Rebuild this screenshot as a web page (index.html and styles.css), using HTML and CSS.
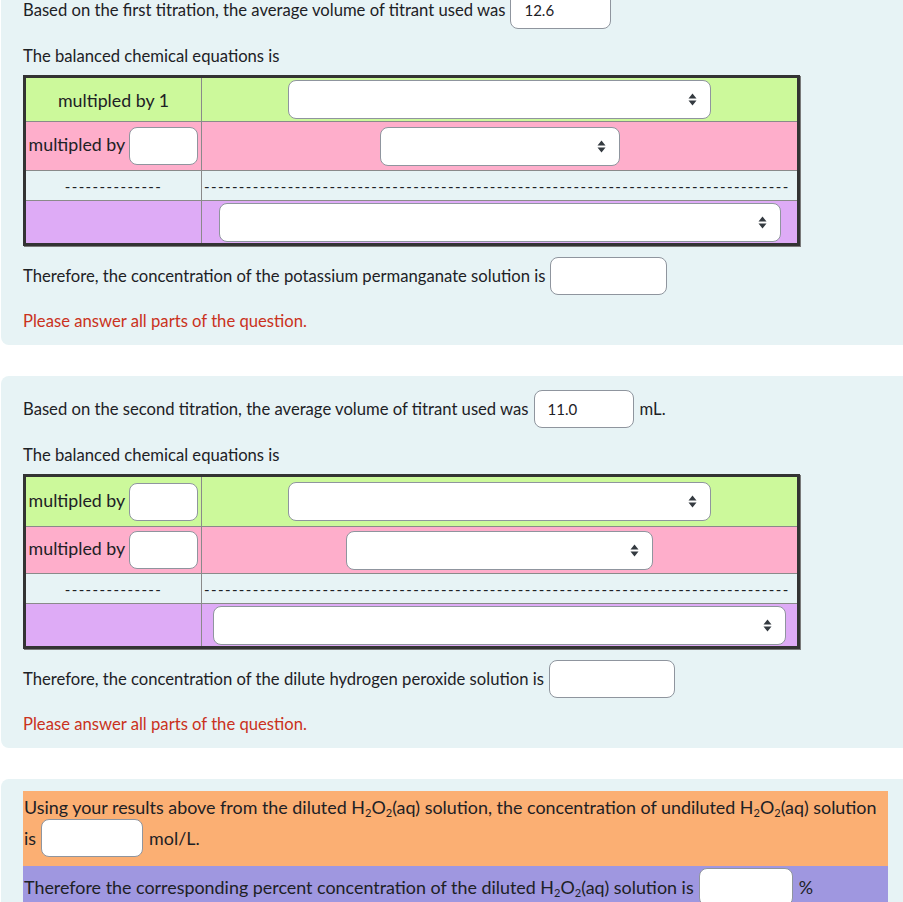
FILE: index.html
```html
<!DOCTYPE html>
<html lang="en">
<head>
<meta charset="utf-8">
<title>Titration</title>
<link rel="stylesheet" href="styles.css">
</head>
<body>
<div class="page">

  <section class="card card-first">
    <div class="line"><span>Based on the first titration, the average volume of titrant used was</span><input class="inp w-vol1" value="12.6"></div>
    <p class="txt">The balanced chemical equations is</p>
    <table class="eq">
      <colgroup><col class="c1"><col class="c2"></colgroup>
      <tr class="green r1a">
        <td>multipled by 1</td>
        <td><span class="sel w423"><select></select><svg class="arr" viewBox="0 0 9 13"><path d="M0.5 5.5 L4.5 0.5 L8.5 5.5 Z M0.5 7.5 L4.5 12.5 L8.5 7.5 Z"/></svg></span></td>
      </tr>
      <tr class="pink r2a">
        <td>multipled by <input class="inp mult"></td>
        <td><span class="sel w240"><select></select><svg class="arr" viewBox="0 0 9 13"><path d="M0.5 5.5 L4.5 0.5 L8.5 5.5 Z M0.5 7.5 L4.5 12.5 L8.5 7.5 Z"/></svg></span></td>
      </tr>
      <tr class="plain r3">
        <td class="dash">--------------</td>
        <td class="dash long">------------------------------------------------------------------------------------</td>
      </tr>
      <tr class="purple r4">
        <td></td>
        <td><span class="sel w562"><select></select><svg class="arr" viewBox="0 0 9 13"><path d="M0.5 5.5 L4.5 0.5 L8.5 5.5 Z M0.5 7.5 L4.5 12.5 L8.5 7.5 Z"/></svg></span></td>
      </tr>
    </table>
    <div class="line mt-gap"><span>Therefore, the concentration of the potassium permanganate solution is</span><input class="inp w117"></div>
    <p class="txt err">Please answer all parts of the question.</p>
  </section>

  <section class="card">
    <div class="line"><span>Based on the second titration, the average volume of titrant used was</span><input class="inp w-vol2" value="11.0"><span class="unit">mL.</span></div>
    <p class="txt">The balanced chemical equations is</p>
    <table class="eq">
      <colgroup><col class="c1"><col class="c2"></colgroup>
      <tr class="green r1b">
        <td>multipled by <input class="inp mult"></td>
        <td><span class="sel w423"><select></select><svg class="arr" viewBox="0 0 9 13"><path d="M0.5 5.5 L4.5 0.5 L8.5 5.5 Z M0.5 7.5 L4.5 12.5 L8.5 7.5 Z"/></svg></span></td>
      </tr>
      <tr class="pink r2b">
        <td>multipled by <input class="inp mult"></td>
        <td><span class="sel w307"><select></select><svg class="arr" viewBox="0 0 9 13"><path d="M0.5 5.5 L4.5 0.5 L8.5 5.5 Z M0.5 7.5 L4.5 12.5 L8.5 7.5 Z"/></svg></span></td>
      </tr>
      <tr class="plain r3">
        <td class="dash">--------------</td>
        <td class="dash long">------------------------------------------------------------------------------------</td>
      </tr>
      <tr class="purple r4">
        <td></td>
        <td><span class="sel w573"><select></select><svg class="arr" viewBox="0 0 9 13"><path d="M0.5 5.5 L4.5 0.5 L8.5 5.5 Z M0.5 7.5 L4.5 12.5 L8.5 7.5 Z"/></svg></span></td>
      </tr>
    </table>
    <div class="line mt-gap"><span>Therefore, the concentration of the dilute hydrogen peroxide solution is</span><input class="inp w126"></div>
    <p class="txt err">Please answer all parts of the question.</p>
  </section>

  <section class="card card-last">
    <div class="block orange">
      <div class="bline">Using your results above from the diluted H<sub>2</sub>O<sub>2</sub>(aq) solution, the concentration of undiluted H<sub>2</sub>O<sub>2</sub>(aq) solution</div>
      <div class="line"><span>is</span><input class="inp w102"><span class="unit">mol/L.</span></div>
    </div>
    <div class="block violet">
      <div class="line"><span>Therefore the corresponding percent concentration of the diluted H<sub>2</sub>O<sub>2</sub>(aq) solution is</span><input class="inp w94"><span class="unit">%</span></div>
    </div>
  </section>

</div>
</body>
</html>
```

FILE: styles.css
```css
html, body {
  margin: 0;
  padding: 0;
  overflow: hidden;
  background: #ffffff;
}

body {
  font-family: Lato, "Segoe UI", "Noto Sans", sans-serif;
  font-size: 16.65px;
  color: #1d2125;
}

.page {
  padding-left: 1px;
  width: 1100px;
}

.card {
  background: #e7f3f5;
  border-radius: 8px;
  width: 1000px;
  padding: 14px 22px 13px 22px;
  margin-bottom: 31px;
}

.card-first {
  margin-top: -23px;
}

.card-last {
  padding-top: 12px;
}

.line {
  display: flex;
  align-items: center;
  gap: 5px;
  height: 38px;
  white-space: nowrap;
}

.line .unit {
  margin-left: 1px;
}

.txt {
  margin: 16px 0 0 0;
  line-height: 22px;
}

.err {
  color: #ca3120;
  margin-top: 15px;
}

.mt-gap {
  margin-top: 11px;
}

.inp {
  box-sizing: border-box;
  height: 38px;
  border: 1px solid #8f959e;
  border-radius: 8px;
  background: #ffffff;
  font-family: Lato, "Segoe UI", sans-serif;
  font-size: 15px;
  color: #1d2125;
  padding: 0 13px;
  margin: 0;
  outline: none;
}

.w-vol1 { width: 101px; }
.w-vol2 { width: 100px; }
.w117 { width: 117px; }
.w126 { width: 126px; }
.w102 { width: 102px; }
.w94 { width: 94px; }
.mult { width: 69px; vertical-align: middle; }

/* equation table */
.eq {
  border-collapse: collapse;
  table-layout: fixed;
  width: 777px;
  margin-top: 8px;
  border: 3px solid #333333;
  box-shadow: 1px 1px 0 #7a7a7a;
}

.eq .c1 { width: 177px; }

.eq td {
  border: 1px solid #8a8a8a;
  padding: 0;
  text-align: center;
  vertical-align: middle;
  white-space: nowrap;
  font-size: 17.8px;
}

.green td { background: #ccf99b; }
.pink td { background: #feaecb; }
.purple td { background: #deabf6; }
.plain td { background: #e7f3f5; }

.r1a td { height: 43px; }
.r2a td { height: 48px; }
.r1b td { height: 49px; }
.r2b td { height: 46px; }
.r3 td { height: 29px; }
.r4 td { height: 42px; }

.eq td.dash {
  letter-spacing: 1.4px;
  font-size: 15px;
}

.eq td.long {
  text-align: left;
  padding-left: 2px;
}

/* select */
.sel {
  position: relative;
  display: inline-block;
  vertical-align: middle;
  height: 39px;
}

.sel select {
  box-sizing: border-box;
  width: 100%;
  height: 39px;
  border: 1px solid #8f959e;
  border-radius: 8px;
  background: #ffffff;
  appearance: none;
  -webkit-appearance: none;
  margin: 0;
  display: block;
}

.sel .arr {
  position: absolute;
  right: 14px;
  top: 13px;
  width: 9px;
  height: 13px;
  fill: #343a40;
}

.w423 { width: 423px; }
.w240 { width: 240px; }
.w562 { width: 562px; }
.w307 { width: 307px; }
.w573 { width: 573px; }

/* bottom coloured blocks */
.block {
  width: 865px;
  box-sizing: border-box;
  padding: 0 1px;
  font-size: 17.9px;
}

.orange {
  background: #fbaf73;
  padding-top: 4px;
  padding-bottom: 9px;
}

.violet {
  background: #9f97e0;
  padding-top: 2px;
  padding-bottom: 6px;
}

.bline {
  line-height: 24px;
  white-space: nowrap;
}

sub {
  font-size: 0.62em;
  vertical-align: -0.25em;
  line-height: 0;
}
```
